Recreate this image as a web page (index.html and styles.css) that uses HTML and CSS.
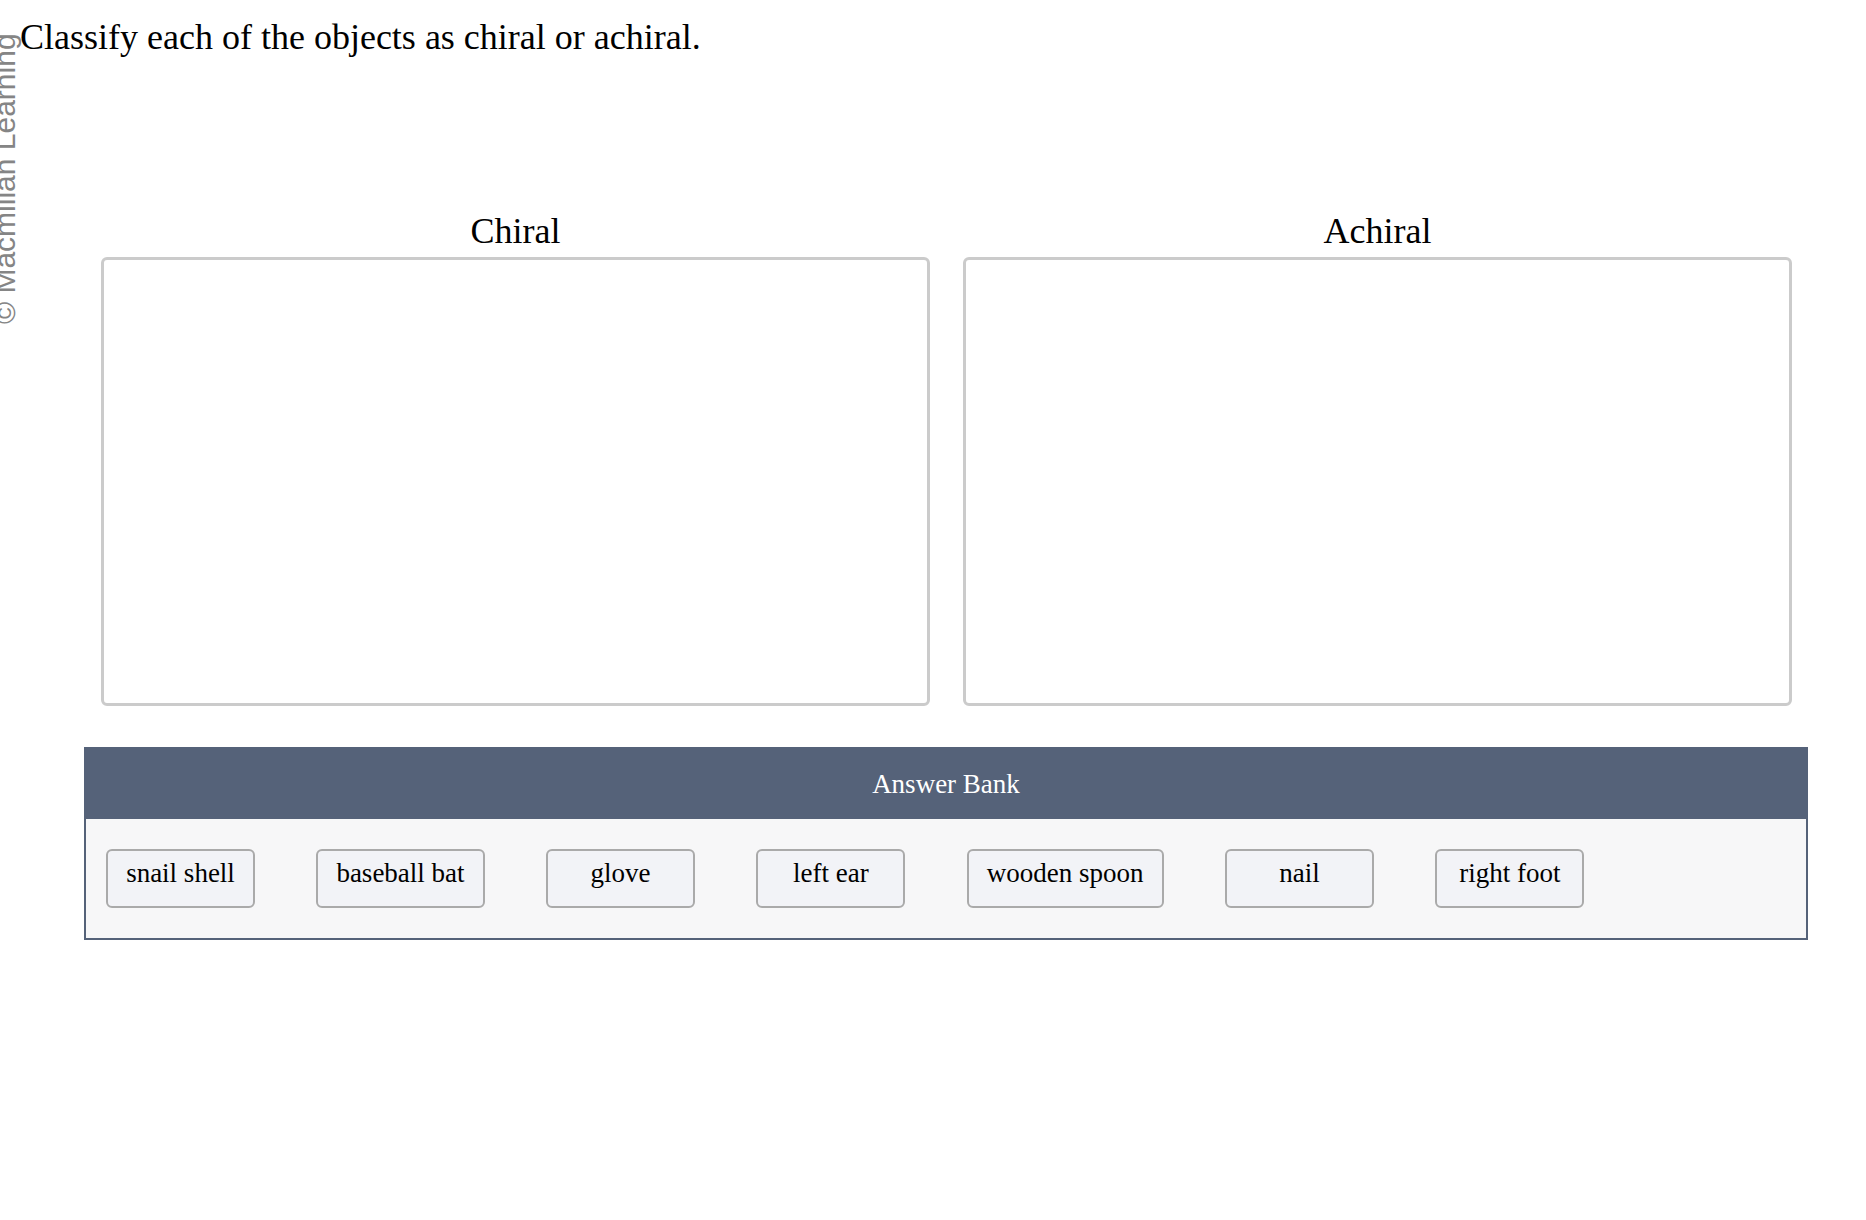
FILE: index.html
```html
<!DOCTYPE html>
<html lang="en">
<head>
<meta charset="utf-8">
<title>Classify chiral or achiral</title>
<link rel="stylesheet" href="styles.css">
</head>
<body>
<div class="watermark">© Macmillan Learning</div>
<main class="page">
  <p class="prompt">Classify each of the objects as chiral or achiral.</p>
  <section class="zones">
    <div class="zone">
      <h2 class="zone-title">Chiral</h2>
      <div class="drop"></div>
    </div>
    <div class="zone">
      <h2 class="zone-title">Achiral</h2>
      <div class="drop"></div>
    </div>
  </section>
  <section class="bank">
    <div class="bank-head">Answer Bank</div>
    <div class="bank-body">
      <span class="chip">snail shell</span>
      <span class="chip">baseball bat</span>
      <span class="chip">glove</span>
      <span class="chip">left ear</span>
      <span class="chip">wooden spoon</span>
      <span class="chip">nail</span>
      <span class="chip">right foot</span>
    </div>
  </section>
</main>
</body>
</html>
```
FILE: styles.css
```css
html, body {
  margin: 0;
  padding: 0;
  background: #ffffff;
}
body {
  font-family: "Liberation Serif", "Times New Roman", serif;
  color: #000;
  position: relative;
  min-height: 1220px;
  overflow: hidden;
}
.watermark {
  position: absolute;
  left: -12.5px;
  top: 323.5px;
  transform-origin: 0 0;
  transform: rotate(-90deg);
  font-family: "Liberation Sans", Arial, sans-serif;
  font-size: 30px;
  line-height: normal;
  color: #858585;
  white-space: nowrap;
}
.page {
  padding: 15.5px 0 0 0;
}
.prompt {
  margin: 0 0 0 20px;
  font-size: 36px;
  line-height: normal;
}
.zones {
  display: flex;
  gap: 33px;
  margin: 152px 0 0 101px;
}
.zone {
  width: 829px;
}
.zone-title {
  margin: 0 0 5.5px 0;
  font-size: 36px;
  font-weight: normal;
  line-height: normal;
  text-align: center;
}
.drop {
  box-sizing: border-box;
  height: 449px;
  border: 3px solid #cbcbcb;
  border-radius: 6px;
  background: #fff;
}
.bank {
  box-sizing: border-box;
  width: 1724px;
  margin: 41px 0 0 84px;
  border: 2px solid #556279;
}
.bank-head {
  height: 70px;
  display: flex;
  align-items: center;
  justify-content: center;
  background: #556279;
  color: #ffffff;
  font-size: 27px;
  line-height: normal;
}
.bank-body {
  display: flex;
  gap: 61.4px;
  padding: 30px 20px;
  background: #f7f7f8;
}
.chip {
  box-sizing: border-box;
  min-width: 149px;
  height: 59px;
  padding: 7px 18px 0;
  border: 2px solid #aaaaaa;
  border-radius: 6px;
  background: #f2f3f7;
  font-size: 27px;
  line-height: normal;
  text-align: center;
  white-space: nowrap;
}
```
